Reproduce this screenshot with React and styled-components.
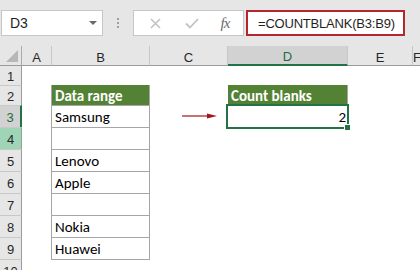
import React from 'react'
import styled, { createGlobalStyle } from 'styled-components'

const GlobalStyle = createGlobalStyle`
	html, body {
		margin: 0;
		padding: 0;
		background: #ffffff;
	}
	body {
		width: 420px;
		height: 270px;
		overflow: hidden;
		font-family: "Liberation Sans", Arial, sans-serif;
	}
`

const UI_FONT = `"Liberation Sans", Arial, sans-serif`
const CELL_FONT = `Carlito, Calibri, Lato, sans-serif`
const GREEN = '#217346'
const TABLE_LINE = '#a6a6a6'

const Window = styled.div`
	width: 420px;
	height: 270px;
	display: flex;
	flex-direction: column;
	overflow: hidden;
`

/* formula bar */

const FormulaBar = styled.div`
	height: 46px;
	flex: none;
	box-sizing: border-box;
	background: #e6e6e6;
	display: flex;
	align-items: flex-start;
	padding: 10px 0 0 1px;
`

const NameBox = styled.div`
	width: 102px;
	height: 26px;
	box-sizing: border-box;
	background: #fff;
	border: 1px solid #c6c6c6;
	display: flex;
	align-items: center;
	justify-content: space-between;
	padding: 0 5px 0 8px;
	font-family: ${UI_FONT};
	font-size: 14px;
	color: #1f1f1f;
`

const DropArrow = styled.span`
	width: 0;
	height: 0;
	border-left: 4px solid transparent;
	border-right: 4px solid transparent;
	border-top: 4px solid #6a6a6a;
`

const Grip = styled.div`
	width: 30px;
	height: 26px;
	display: flex;
	flex-direction: column;
	align-items: center;
	justify-content: center;
	gap: 2px;
`

const GripDot = styled.span`
	width: 2px;
	height: 2px;
	background: #a0a0a0;
`

const ButtonBox = styled.div`
	width: 111px;
	height: 26px;
	box-sizing: border-box;
	background: #fff;
	border: 1px solid #c6c6c6;
	display: grid;
	grid-template-columns: 38px 35px 1fr;
	align-items: center;
	justify-items: center;
	padding-left: 2px;
`

const Fx = styled.span`
	font-family: "Liberation Serif", "Times New Roman", serif;
	font-style: italic;
	font-size: 15px;
	color: #6b6b6b;
	letter-spacing: -1px;
	padding-right: 2px;
`

const FormulaInput = styled.div`
	width: 159px;
	height: 26px;
	margin-left: 2px;
	box-sizing: border-box;
	background: #fff;
	border: 2px solid #b5262e;
	display: flex;
	align-items: center;
	padding-left: 10px;
	font-family: ${UI_FONT};
	font-size: 13px;
	letter-spacing: -0.2px;
	color: #1f1f1f;
`

/* sheet */

const Sheet = styled.div`
	flex: none;
	display: grid;
	grid-template-columns: 22px 30px 98px 78px 120px 65px 1fr;
	grid-template-rows: 20px 19px 20px repeat(8, 22px);
	background: #fff;
`

const Corner = styled.div`
	background: #e6e6e6;
	border-right: 1px solid #ababab;
	border-bottom: 1px solid #9b9b9b;
	position: relative;
	overflow: hidden;
	&::after {
		content: '';
		position: absolute;
		right: 3px;
		bottom: 3px;
		width: 0;
		height: 0;
		border-left: 12px solid transparent;
		border-bottom: 12px solid #b7b7b7;
	}
`

const ColHeader = styled.div`
	background: ${p => (p.$active ? '#d2d2d2' : '#e6e6e6')};
	color: ${p => (p.$active ? '#1e6b40' : '#262626')};
	border-right: 1px solid #c8c8c8;
	border-bottom: ${p => (p.$active ? `2px solid ${GREEN}` : '1px solid #9b9b9b')};
	display: flex;
	align-items: center;
	justify-content: center;
	padding-top: 3px;
	box-sizing: border-box;
	font-family: ${UI_FONT};
	font-size: 13px;
`

const RowHeader = styled.div`
	background: ${p => p.$bg || '#e6e6e6'};
	color: ${p => (p.$active ? '#1e6b40' : '#262626')};
	border-right: ${p => (p.$active ? `2px solid ${GREEN}` : '1px solid #9b9b9b')};
	border-top: ${p => (p.$first ? 'none' : '1px solid #c8c8c8')};
	box-sizing: border-box;
	display: flex;
	align-items: center;
	justify-content: center;
	padding-top: 1px;
	font-family: ${UI_FONT};
	font-size: 13px;
`

const Cell = styled.div`
	box-sizing: border-box;
	display: flex;
	align-items: flex-end;
	padding: 0 3px 1px 3px;
	font-family: ${CELL_FONT};
	font-size: 15px;
	color: #000;
	white-space: nowrap;
`

const TableCell = styled(Cell)`
	margin-left: -1px;
	border-left: 1px solid ${TABLE_LINE};
	border-right: 1px solid ${TABLE_LINE};
	border-top: 1px solid ${TABLE_LINE};
	box-shadow: ${p => (p.$last ? `0 1px 0 ${TABLE_LINE}` : 'none')};
`

const HeadCell = styled(Cell)`
	background: #548235;
	color: #fff;
	font-weight: bold;
	padding-bottom: 0;
	border-right: 1px solid ${TABLE_LINE};
	margin-left: ${p => (p.$table ? '-1px' : '0')};
	border-left: ${p => (p.$table ? `1px solid ${TABLE_LINE}` : 'none')};
`

const ValueCell = styled(Cell)`
	justify-content: flex-end;
	position: relative;
	padding-right: 2px;
`

const Selection = styled.span`
	position: absolute;
	top: -1px;
	left: -2px;
	right: -1px;
	bottom: -2px;
	border: 2px solid ${GREEN};
	pointer-events: none;
	&::after {
		content: '';
		position: absolute;
		right: -4px;
		bottom: -4px;
		width: 5px;
		height: 5px;
		background: ${GREEN};
		border: 1px solid #fff;
	}
`

const ArrowCell = styled.div`
	display: flex;
	align-items: center;
	justify-content: flex-end;
	padding-right: 10px;
`

const Blank = styled.div``

const columns = ['A', 'B', 'C', 'D', 'E', 'F']
const brands = ['Samsung', '', 'Lenovo', 'Apple', '', 'Nokia', 'Huawei']

function CloseIcon() {
	return (
		<svg width="11" height="11" viewBox="0 0 11 11">
			<path d="M1 1 L10 10 M10 1 L1 10" stroke="#c3c3c3" strokeWidth="1.6" fill="none" />
		</svg>
	)
}

function CheckIcon() {
	return (
		<svg width="14" height="11" viewBox="0 0 14 11">
			<path d="M1 5.5 L5 9.5 L13 1" stroke="#c3c3c3" strokeWidth="1.8" fill="none" />
		</svg>
	)
}

function Arrow() {
	return (
		<svg width="36" height="8" viewBox="0 0 36 8">
			<line x1="0" y1="4" x2="28" y2="4" stroke="#a3161b" strokeWidth="1.2" />
			<path d="M25 1.5 L35 4 L25 6.5 Z" fill="#a3161b" />
		</svg>
	)
}

export default function App() {
	const rowBg = r => (r === 3 ? '#d2d2d2' : r === 4 ? '#9fd5b7' : undefined)

	return (
		<Window>
			<GlobalStyle />
			<FormulaBar>
				<NameBox>
					D3
					<DropArrow />
				</NameBox>
				<Grip>
					<GripDot />
					<GripDot />
					<GripDot />
				</Grip>
				<ButtonBox>
					<CloseIcon />
					<CheckIcon />
					<Fx>fx</Fx>
				</ButtonBox>
				<FormulaInput>=COUNTBLANK(B3:B9)</FormulaInput>
			</FormulaBar>

			<Sheet>
				<Corner />
				{columns.map(c => (
					<ColHeader key={c} $active={c === 'D'}>{c}</ColHeader>
				))}

				{/* row 1 */}
				<RowHeader $first>1</RowHeader>
				{columns.map(c => <Blank key={'r1' + c} />)}

				{/* row 2 */}
				<RowHeader>2</RowHeader>
				<Blank />
				<HeadCell $table>Data range</HeadCell>
				<Blank />
				<HeadCell>Count blanks</HeadCell>
				<Blank />
				<Blank />

				{brands.map((b, i) => {
					const r = i + 3
					return (
						<React.Fragment key={r}>
							<RowHeader $bg={rowBg(r)} $active={r === 3}>{r}</RowHeader>
							<Blank />
							<TableCell $last={r === 9}>{b}</TableCell>
							{r === 3 ? (
								<ArrowCell><Arrow /></ArrowCell>
							) : <Blank />}
							{r === 3 ? (
								<ValueCell>2<Selection /></ValueCell>
							) : <Blank />}
							<Blank />
							<Blank />
						</React.Fragment>
					)
				})}

				<RowHeader>10</RowHeader>
			</Sheet>
		</Window>
	)
}
